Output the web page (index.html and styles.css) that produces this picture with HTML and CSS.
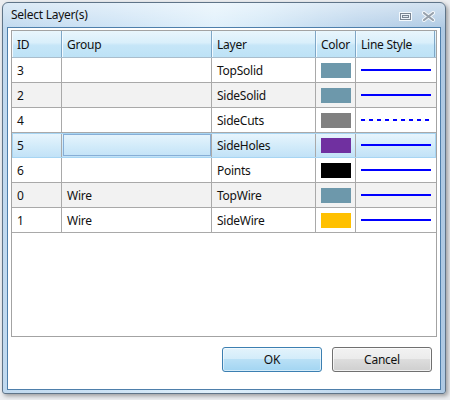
FILE: index.html
```html
<!DOCTYPE html>
<html>
<head>
<meta charset="utf-8">
<link rel="stylesheet" href="styles.css">
</head>
<body>
<div class="window">
  <div class="titlebar">
    <span class="title">Select Layer(s)</span>
    <div class="caption">
      <svg class="cap-restore" width="13" height="9" viewBox="0 0 13 9">
        <rect x="0.5" y="0.5" width="12" height="8" fill="none" stroke="#f4f9fd" stroke-width="1"/>
        <rect x="1.5" y="1.5" width="10" height="6" fill="#eef4fa" stroke="#7a8593" stroke-width="1"/>
        <rect x="3.5" y="3.5" width="6" height="2" fill="#dfe8f1" stroke="#7a8593" stroke-width="1"/>
      </svg>
      <svg class="cap-close" width="13" height="11" viewBox="0 0 13 11">
        <path d="M2 2 L11 9 M11 2 L2 9" stroke="#f6fafd" stroke-width="4" stroke-linecap="round"/>
        <path d="M2 2 L11 9 M11 2 L2 9" stroke="#97a1ac" stroke-width="2.2" stroke-linecap="round"/>
      </svg>
    </div>
  </div>
  <div class="client">
    <div class="grid">
      <div class="row header">
        <div class="cell c-id">ID</div>
        <div class="cell c-group">Group</div>
        <div class="cell c-layer">Layer</div>
        <div class="cell c-color">Color</div>
        <div class="cell c-line">Line Style</div>
      </div>
      <div class="row">
        <div class="cell c-id">3</div>
        <div class="cell c-group"></div>
        <div class="cell c-layer">TopSolid</div>
        <div class="cell c-color"><span class="swatch sw-steel"></span></div>
        <div class="cell c-line"><span class="stroke"></span></div>
      </div>
      <div class="row alt">
        <div class="cell c-id">2</div>
        <div class="cell c-group"></div>
        <div class="cell c-layer">SideSolid</div>
        <div class="cell c-color"><span class="swatch sw-steel"></span></div>
        <div class="cell c-line"><span class="stroke"></span></div>
      </div>
      <div class="row">
        <div class="cell c-id">4</div>
        <div class="cell c-group"></div>
        <div class="cell c-layer">SideCuts</div>
        <div class="cell c-color"><span class="swatch sw-grey"></span></div>
        <div class="cell c-line"><span class="stroke dashed"></span></div>
      </div>
      <div class="row selected">
        <div class="cell c-id">5</div>
        <div class="cell c-group focus"></div>
        <div class="cell c-layer">SideHoles</div>
        <div class="cell c-color"><span class="swatch sw-purple"></span></div>
        <div class="cell c-line"><span class="stroke"></span></div>
      </div>
      <div class="row">
        <div class="cell c-id">6</div>
        <div class="cell c-group"></div>
        <div class="cell c-layer">Points</div>
        <div class="cell c-color"><span class="swatch sw-black"></span></div>
        <div class="cell c-line"><span class="stroke"></span></div>
      </div>
      <div class="row alt">
        <div class="cell c-id">0</div>
        <div class="cell c-group">Wire</div>
        <div class="cell c-layer">TopWire</div>
        <div class="cell c-color"><span class="swatch sw-steel"></span></div>
        <div class="cell c-line"><span class="stroke"></span></div>
      </div>
      <div class="row">
        <div class="cell c-id">1</div>
        <div class="cell c-group">Wire</div>
        <div class="cell c-layer">SideWire</div>
        <div class="cell c-color"><span class="swatch sw-amber"></span></div>
        <div class="cell c-line"><span class="stroke"></span></div>
      </div>
    </div>
    <div class="buttons">
      <button class="btn btn-default">OK</button>
      <button class="btn">Cancel</button>
    </div>
  </div>
</div>
</body>
</html>
```
FILE: styles.css
```css
html, body {
  margin: 0;
  padding: 0;
  width: 450px;
  height: 400px;
  overflow: hidden;
  background: #eceef1;
}
body {
  font-family: "Noto Sans", "Open Sans", sans-serif;
  font-size: 12px;
  letter-spacing: -0.25px;
  color: #111;
}
.window {
  margin: 2px 0 0 2px;
  width: 444px;
  height: 392px;
  box-sizing: border-box;
  border: 1px solid #5f7488;
  border-radius: 6px 6px 3px 3px;
  padding: 0 4px 3px 4px;
  display: flex;
  flex-direction: column;
  background:
    linear-gradient(to bottom, rgba(255,255,255,0.45), rgba(255,255,255,0) 26px),
    linear-gradient(to right, #c0d9ef 0%, #cde3f5 25%, #e0f0fb 48%, #d6eaf8 58%, #bcd5ec 80%, #aec9e3 100%);
  box-shadow: 2px 2px 4px rgba(0,0,0,0.35);
}
.titlebar {
  height: 24px;
  display: flex;
  align-items: center;
  padding: 0 6px 0 4px;
}
.title {
  flex: 1;
  padding-bottom: 1px;
}
.caption {
  display: flex;
  align-items: center;
  gap: 10px;
  padding-top: 3px;
}
.cap-restore, .cap-close {
  display: block;
}
.client {
  flex: 1;
  border: 1px solid #4e7fab;
  background: #fff;
  padding: 2px 3px 0 3px;
  display: flex;
  flex-direction: column;
}
.grid {
  height: 307px;
  box-sizing: border-box;
  border: 1px solid #a3a3a3;
}
.row {
  display: flex;
  height: 25px;
  box-sizing: border-box;
  border-bottom: 1px solid #a9a9a9;
  background: #fff;
}
.row.alt {
  background: #f2f2f2;
}
.row.header {
  height: 27px;
  background: linear-gradient(to bottom, #e9f6fd 0%, #d9effb 45%, #c6e6f8 55%, #bde2f6 100%);
  border-bottom: 1px solid #a9bdcc;
}
.row.selected {
  background: linear-gradient(to bottom, #e8f5fd 0%, #d4ecfa 50%, #c2e2f7 100%);
  outline: 1px solid #a7d5f3;
  outline-offset: -1px;
}
.cell {
  box-sizing: border-box;
  border-right: 1px solid #a9a9a9;
  padding-left: 5px;
  display: flex;
  align-items: center;
  white-space: nowrap;
  overflow: hidden;
}
.header .cell {
  border-right: 1px solid #7ea7c7;
  box-shadow: inset 1px 0 0 #f3faff;
}
.c-id { width: 50px; }
.c-group { width: 150px; }
.c-layer { width: 104px; }
.c-color { width: 40px; }
.c-line { width: 80px; border-right: none; }
.header .c-line { width: 79px; }
.row:not(.header) .c-color,
.row:not(.header) .c-line {
  padding-left: 0;
  justify-content: center;
}
.focus {
  outline: 1px solid #86aed6;
  outline-offset: -2px;
}
.swatch {
  display: block;
  width: 30px;
  height: 15px;
}
.sw-steel { background: #6d98ab; }
.sw-grey { background: #808080; }
.sw-purple { background: #7030a0; }
.sw-black { background: #000; }
.sw-amber { background: #ffc000; }
.stroke {
  display: block;
  width: 70px;
  height: 2px;
  background: #0000ff;
}
.stroke.dashed {
  background: repeating-linear-gradient(to right, #0000ff 0 4px, transparent 4px 8px);
}
.buttons {
  margin-top: 10px;
  padding-right: 5px;
  display: flex;
  justify-content: flex-end;
  gap: 10px;
}
.btn {
  width: 100px;
  height: 25px;
  box-sizing: border-box;
  border: 1px solid #707070;
  border-radius: 3px;
  font-family: inherit;
  font-size: 12px;
  letter-spacing: -0.25px;
  color: #111;
  padding: 0 0 1px 0;
  background: linear-gradient(to bottom, #f2f2f2 0%, #ebebeb 50%, #dddddd 50%, #cfcfcf 100%);
  box-shadow: inset 0 0 0 1px rgba(255,255,255,0.7);
}
.btn-default {
  border-color: #3c7fb1;
  background: linear-gradient(to bottom, #e3f3fc 0%, #d2ecfa 50%, #b9e0f6 50%, #a2d5f2 100%);
  box-shadow: inset 0 0 0 1px rgba(255,255,255,0.55);
}
```
